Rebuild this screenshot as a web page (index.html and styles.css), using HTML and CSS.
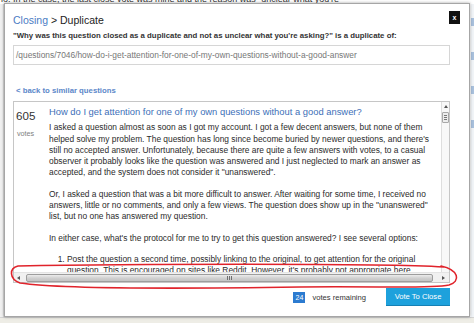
FILE: index.html
```html
<!DOCTYPE html>
<html lang="en">
<head>
<meta charset="utf-8">
<title>Closing &gt; Duplicate</title>
<link rel="stylesheet" href="styles.css">
</head>
<body>
<div class="page">
  <div class="page-top">lo. In the case, the last close vote was mine and the reason was "unclear what you're</div>
  <div class="page-middle">
    <div class="page-left"></div>
    <div class="page-fill"></div>
    <div class="page-right">
      <span class="side-bit"></span>
      <span class="side-bit"></span>
      <span class="side-bit"></span>
      <span class="side-bit"></span>
    </div>
  </div>
  <div class="page-bottom"></div>
</div>

<div class="modal" role="dialog">
  <div class="modal-head">
    <h1 class="crumbs"><a class="crumb-link" href="#">Closing</a> &gt; Duplicate</h1>
    <button class="close" type="button">x</button>
  </div>
  <p class="label">"Why was this question closed as a duplicate and not as unclear what you're asking?" is a duplicate of:</p>
  <div class="url-input">/questions/7046/how-do-i-get-attention-for-one-of-my-own-questions-without-a-good-answer</div>
  <a class="back" href="#">&lt; back to similar questions</a>

  <div class="preview">
    <div class="preview-main">
      <div class="preview-scroll">
        <div class="votes">
          <div class="vote-count">605</div>
          <div class="vote-label">votes</div>
        </div>
        <div class="post">
          <h2 class="post-title">How do I get attention for one of my own questions without a good answer?</h2>
          <div class="post-body">
            <p>I asked a question almost as soon as I got my account. I got a few decent answers, but none of them helped solve my problem. The question has long since become buried by newer questions, and there's still no accepted answer. Unfortunately, because there are quite a few answers with votes, to a casual observer it probably looks like the question was answered and I just neglected to mark an answer as accepted, and the system does not consider it "unanswered".</p>
            <p>Or, I asked a question that was a bit more difficult to answer. After waiting for some time, I received no answers, little or no comments, and only a few views. The question does show up in the "unanswered" list, but no one has answered my question.</p>
            <p>In either case, what's the protocol for me to try to get this question answered? I see several options:</p>
            <ol>
              <li>Post the question a second time, possibly linking to the original, to get attention for the original question. This is encouraged on sites like Reddit. However, it's probably not appropriate here.</li>
            </ol>
          </div>
        </div>
      </div>
      <div class="vscroll">
        <span class="vs-up"></span>
        <span class="vs-thumb"></span>
      </div>
    </div>
    <div class="hscroll">
      <span class="hs-left"></span>
      <span class="hs-thumb"></span>
      <span class="hs-right"></span>
    </div>
  </div>

  <div class="footer">
    <span class="badge">24</span>
    <span class="remaining">votes remaining</span>
    <button class="vote" type="button">Vote To Close</button>
  </div>
</div>

<svg class="annotation" width="474" height="323" viewBox="0 0 474 323" aria-hidden="true">
  <path d="M444 267 C 380 263, 120 264, 18 266 C 9 268, 9 279, 20 283 C 60 289, 170 289, 300 287 C 380 286, 430 289, 449 285 C 461 281, 459 270, 441 266" fill="none" stroke="#e0232b" stroke-width="1.6" stroke-linecap="round"/>
</svg>
</body>
</html>
```

FILE: styles.css
```css
html, body {
  margin: 0;
  padding: 0;
}

body {
  width: 474px;
  height: 323px;
  overflow: hidden;
  position: relative;
  background: #ffffff;
  font-family: "Liberation Sans", Arial, sans-serif;
}

/* ---------- page behind the dialog ---------- */
.page {
  height: 323px;
  display: flex;
  flex-direction: column;
}

.page-top {
  margin-top: -6px;
  padding-left: 1px;
  font-size: 9px;
  line-height: 10px;
  color: #333;
  white-space: nowrap;
  overflow: hidden;
}

.page-middle {
  flex: 1;
  display: flex;
}

.page-left {
  width: 3px;
  background: #f1f1f1;
  border-right: 1px solid #dadada;
}

.page-fill {
  flex: 1;
}

.page-right {
  width: 3px;
  background: #f2f5f8;
  display: flex;
  flex-direction: column;
  gap: 26px;
  padding-top: 14px;
}

.side-bit {
  display: block;
  height: 8px;
  background: #a9c1dd;
}

.page-bottom {
  height: 5px;
  background: #eeede6;
  border-top: 1px solid #d4d4d4;
}

/* ---------- dialog ---------- */
.modal {
  position: absolute;
  left: 4px;
  top: 3px;
  width: 466px;
  height: 314px;
  box-sizing: border-box;
  border: 1px solid #a6a6a6;
  background: #fff;
  box-shadow: 0 0 3px rgba(0, 0, 0, 0.35);
  padding: 8px 19px 0 8px;
  display: flex;
  flex-direction: column;
}

.modal-head {
  display: flex;
  justify-content: space-between;
  align-items: flex-start;
  height: 17px;
}

.crumbs {
  margin: 0;
  font-size: 10.5px;
  line-height: 17px;
  font-weight: normal;
  color: #222;
}

.crumb-link {
  color: #4a7cc4;
  text-decoration: none;
}

.close {
  width: 11px;
  height: 13px;
  margin: -1px -10px 0 0;
  padding: 0;
  border: 0;
  background: #111;
  color: #fff;
  font: bold 7px/13px "Liberation Sans", Arial, sans-serif;
  text-align: center;
}

.label {
  margin: 2px 0 0;
  font-size: 7.8px;
  line-height: 10px;
  font-weight: bold;
  color: #333;
  white-space: nowrap;
}

.url-input {
  margin-top: 4px;
  height: 20px;
  box-sizing: border-box;
  border: 1px solid #d6d6d6;
  padding-left: 2px;
  font-size: 8.4px;
  line-height: 18px;
  color: #777;
  white-space: nowrap;
  overflow: hidden;
}

.back {
  display: block;
  margin-top: 21px;
  padding-left: 3px;
  font-size: 7.75px;
  line-height: 10px;
  font-weight: bold;
  color: #5b87c9;
  text-decoration: none;
}

/* ---------- preview ---------- */
.preview {
  margin-top: 5px;
  height: 182px;
  box-sizing: border-box;
  border: 1px solid #c6c6c6;
  display: flex;
  flex-direction: column;
}

.preview-main {
  flex: 1;
  min-height: 0;
  display: flex;
}

.preview-scroll {
  flex: 1;
  min-width: 0;
  overflow: hidden;
  display: flex;
  padding-left: 2px;
}

.votes {
  width: 33px;
  flex: none;
  padding-top: 7px;
}

.vote-count {
  font-size: 11.6px;
  line-height: 14px;
  color: #333;
}

.vote-label {
  margin-top: 5.5px;
  padding-left: 1px;
  font-size: 7.2px;
  line-height: 9px;
  color: #808080;
}

.post {
  width: 388px;
  flex: none;
  padding-top: 4px;
}

.post-title {
  margin: 0;
  font-size: 9.4px;
  line-height: 12px;
  font-weight: normal;
  color: #3d6fb8;
  white-space: nowrap;
}

.post-body {
  margin-top: 4.4px;
  font-size: 8.4px;
  line-height: 11.2px;
  color: #2b2b2b;
}

.post-body p {
  margin: 0 0 10.3px;
}

.post-body ol {
  margin: 0;
  padding-left: 18px;
}

.vscroll {
  width: 8px;
  flex: none;
  box-sizing: border-box;
  border-left: 1px solid #dedede;
  background: #f8f8f8;
  display: flex;
  flex-direction: column;
  align-items: center;
}

.vs-up {
  margin-top: 3px;
  width: 0;
  height: 0;
  border-left: 2px solid transparent;
  border-right: 2px solid transparent;
  border-bottom: 3px solid #555;
}

.vs-thumb {
  margin-top: 4px;
  width: 5px;
  height: 9px;
  border: 1px solid #a8a8a8;
  border-radius: 1px;
  background:
    repeating-linear-gradient(to bottom, #777 0 1px, transparent 1px 2px) center / 3px 5px no-repeat,
    #ededed;
}

.hscroll {
  height: 10px;
  flex: none;
  box-sizing: border-box;
  border-top: 1px solid #e4e4e4;
  background: #f1f1f1;
  display: flex;
  align-items: center;
  padding: 0 4px 0 3px;
}

.hs-left,
.hs-right {
  width: 0;
  height: 0;
  border-top: 2px solid transparent;
  border-bottom: 2px solid transparent;
}

.hs-left {
  border-right: 3px solid #555;
}

.hs-right {
  border-left: 3px solid #555;
}

.hs-thumb {
  flex: 1;
  height: 8px;
  margin: 0 9px 0 6px;
  box-sizing: border-box;
  border: 1px solid #9d9d9d;
  border-radius: 2px;
  background:
    repeating-linear-gradient(to right, #6f6f6f 0 1px, transparent 1px 2px) center / 5px 4px no-repeat,
    linear-gradient(#ececec, #cfcfcf 55%, #c4c4c4);
}

/* ---------- footer ---------- */
.footer {
  margin-top: 5px;
  height: 18px;
  display: flex;
  justify-content: flex-end;
  align-items: center;
}

.badge {
  width: 12px;
  height: 11px;
  background: #2c7bd0;
  color: #fff;
  font-size: 7px;
  line-height: 11px;
  text-align: center;
}

.remaining {
  margin-left: 7px;
  margin-right: 20px;
  font-size: 7.6px;
  color: #333;
}

.vote {
  width: 64px;
  height: 18px;
  padding: 0;
  border: 0;
  border-bottom: 1px solid #1580b4;
  background: #1da1dc;
  color: #fff;
  font: 7.6px/17px "Liberation Sans", Arial, sans-serif;
  text-align: center;
}

/* ---------- annotation ---------- */
.annotation {
  position: absolute;
  left: 0;
  top: 0;
  pointer-events: none;
}
```
